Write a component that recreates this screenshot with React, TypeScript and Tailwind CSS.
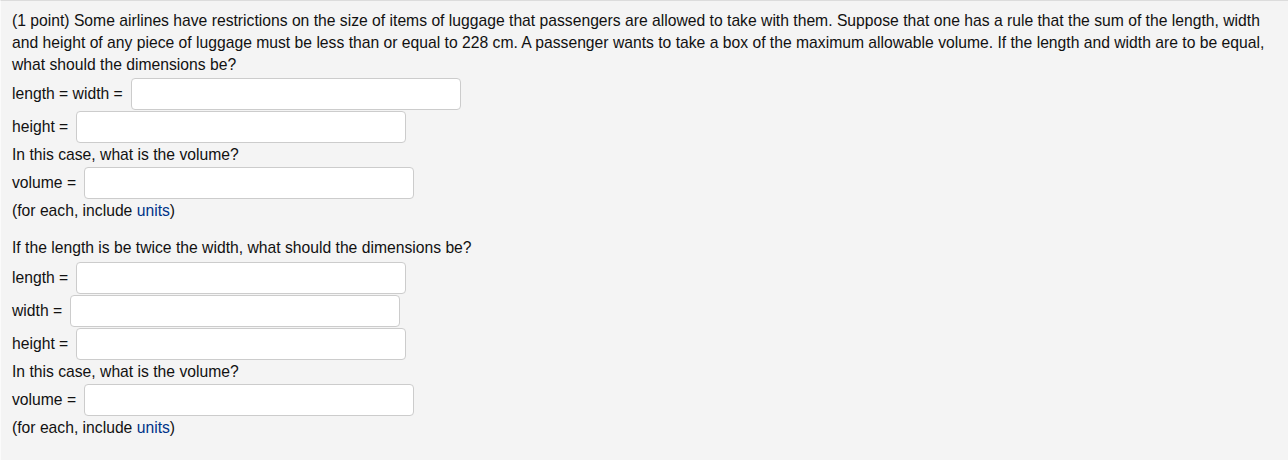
const font = { fontFamily: '"Liberation Sans", Arial, sans-serif' };

function AnswerRow({ label, className = '' }: { label: string; className?: string }) {
  return (
    <div className={`flex h-[33px] items-start gap-2 ${className}`}>
      <span className="leading-[32px]">{label}</span>
      <input
        type="text"
        className="h-[32px] w-[330px] rounded-[4px] border border-[#cccccc] bg-white px-2 text-sm outline-none"
      />
    </div>
  );
}

function Line({ children, className = '' }: { children: React.ReactNode; className?: string }) {
  return <div className={`h-[22px] leading-[22px] ${className}`}>{children}</div>;
}

function Units() {
  return (
    <Line>
      (for each, include <a className="text-[#003388]">units</a>)
    </Line>
  );
}

export default function App() {
  return (
    <div
      className="h-[460px] w-[1288px] border-t border-l border-t-[#dcdcdc] border-l-[#fbfbfb] bg-[#f4f4f4] pt-[9px] pr-3 pl-[11px] text-[15.7px] text-[#111111]"
      style={font}
    >
      <p className="leading-[22px]">
        (1 point) Some airlines have restrictions on the size of items of luggage that passengers are allowed to take
        with them. Suppose that one has a rule that the sum of the length, width and height of any piece of luggage
        must be less than or equal to 228 cm. A passenger wants to take a box of the maximum allowable volume. If the
        length and width are to be equal, what should the dimensions be?
      </p>
      <AnswerRow label="length = width =" className="mt-[2px]" />
      <AnswerRow label="height =" />
      <Line>In this case, what is the volume?</Line>
      <AnswerRow label="volume =" className="pt-[1px] h-[34px]" />
      <Units />

      <Line className="mt-[15px]">If the length is be twice the width, what should the dimensions be?</Line>
      <AnswerRow label="length =" className="mt-[3px]" />
      <AnswerRow label="width =" />
      <AnswerRow label="height =" />
      <Line>In this case, what is the volume?</Line>
      <AnswerRow label="volume =" className="pt-[1px] h-[34px]" />
      <Units />
    </div>
  );
}
